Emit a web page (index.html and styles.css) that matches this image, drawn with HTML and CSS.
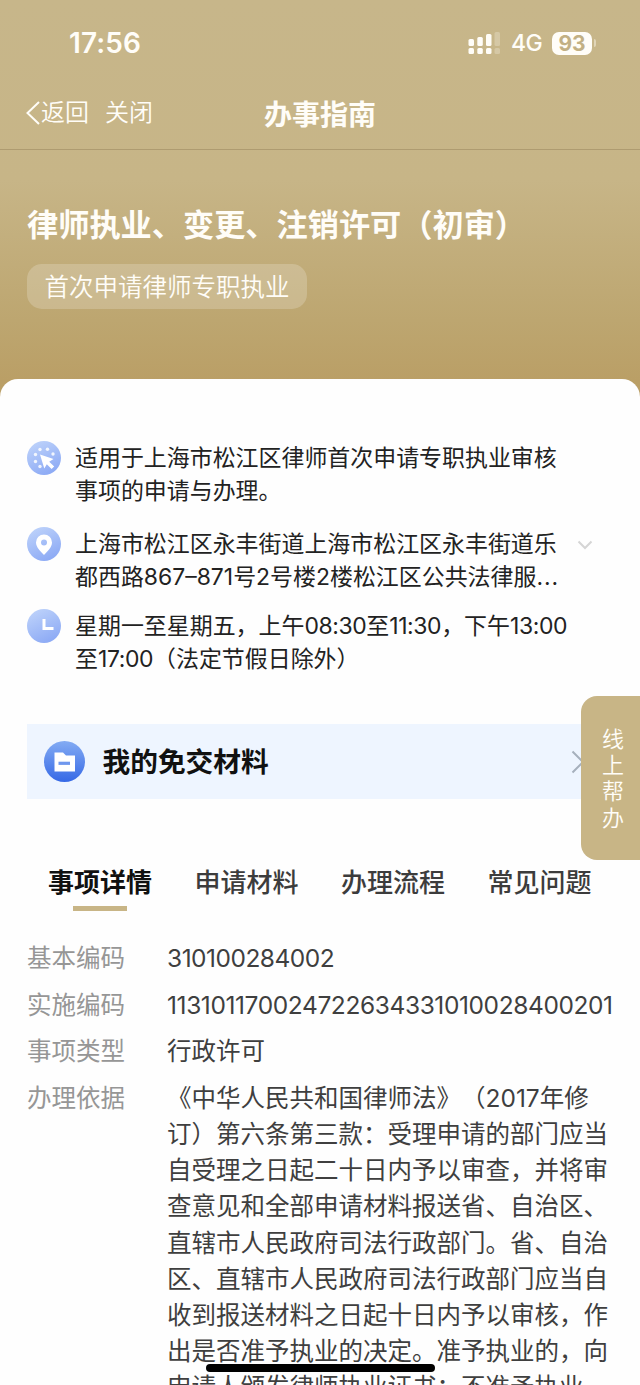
FILE: index.html
```html
<!DOCTYPE html>
<html lang="zh-CN">
<head>
<meta charset="utf-8">
<title>办事指南</title>
<link rel="stylesheet" href="styles.css">
</head>
<body>
<div class="screen">
  <header class="hero">
    <div class="status">
      <span class="time">17:56</span>
      <div class="indicators">
        <svg class="signal" width="33" height="24" viewBox="0 0 33 24" fill="#fffdf8">
          <rect x="0.5" y="8" width="5.5" height="7" rx="1.5"/><rect x="0.5" y="17" width="5.5" height="6" rx="1.5"/>
          <rect x="9.3" y="6" width="5.5" height="9" rx="1.5"/><rect x="9.3" y="17" width="5.5" height="6" rx="1.5"/>
          <rect x="18" y="3" width="5.5" height="12" rx="1.5"/><rect x="18" y="17" width="5.5" height="6" rx="1.5"/>
          <g opacity=".25"><rect x="26.5" y="1" width="5.5" height="14" rx="1.5"/><rect x="26.5" y="17" width="5.5" height="6" rx="1.5"/></g>
        </svg>
        <span class="network">4G</span>
        <span class="battery">93</span>
        <span class="battery-tip"></span>
      </div>
    </div>
    <nav class="navbar">
      <div class="nav-links">
        <svg width="16" height="26" viewBox="0 0 16 26" fill="none" stroke="#fffdf8" stroke-width="2"><path d="M14 2 2.500 13 14 24"/></svg>
        <span>返回</span><span class="close">关闭</span>
      </div>
      <h1 class="nav-title">办事指南</h1>
    </nav>
    <h2 class="service-title">律师执业、变更、注销许可（初审）</h2>
    <span class="pill">首次申请律师专职执业</span>
  </header>

  <main class="sheet">
    <section class="info">
      <div class="info-row">
        <svg class="info-icon" width="34" height="34" viewBox="0 0 34 34">
          <defs><linearGradient id="soft" x1="0" y1="0" x2="0.5" y2="1"><stop offset="0" stop-color="#c2d6fb"/><stop offset="1" stop-color="#8facf5"/></linearGradient></defs>
          <circle cx="17" cy="17" r="17" fill="url(#soft)"/>
          <g fill="#fff" opacity=".85">
            <circle cx="13" cy="8.500" r="1.700"/><circle cx="20.500" cy="8.300" r="1.700"/><circle cx="26" cy="13" r="1.700"/>
            <circle cx="8.500" cy="13.500" r="1.700"/><circle cx="8.500" cy="20.500" r="1.700"/><circle cx="13" cy="25.500" r="1.700"/>
          </g>
          <path d="m13 13.500 13.500 4.500-4.300 2.700 5 4.900-2.600 2.500-4.800-4.900-2.500 4.300z" fill="#fff"/>
        </svg>
        <p>适用于上海市松江区律师首次申请专职执业审核<br>事项的申请与办理。</p>
      </div>
      <div class="info-row">
        <svg class="info-icon" width="34" height="34" viewBox="0 0 34 34">
          <circle cx="17" cy="17" r="17" fill="url(#soft)"/>
          <path fill-rule="evenodd" fill="#fff" d="M17 7.500a8 8 0 0 1 8 8c0 4.500-4.200 8.500-8 12.500-3.800-4-8-8-8-12.500a8 8 0 0 1 8-8zm0 5a3 3 0 1 0 0 6 3 3 0 0 0 0-6z"/>
        </svg>
        <p>上海市松江区永丰街道上海市松江区永丰街道乐<br>都西路867–871号2号楼2楼松江区公共法律服<span class="dots">...</span></p>
        <svg class="expand" width="16" height="10" viewBox="0 0 16 10" fill="none" stroke="#d5d5d5" stroke-width="2"><path d="m1.500 1.500 6.500 6.500 6.500-6.500"/></svg>
      </div>
      <div class="info-row">
        <svg class="info-icon" width="34" height="34" viewBox="0 0 34 34">
          <circle cx="17" cy="17" r="17" fill="url(#soft)"/>
          <path d="M17 10v9.500h9.500" fill="none" stroke="#fff" stroke-width="3"/>
        </svg>
        <p>星期一至星期五，上午<span class="hours">08:30</span>至<span class="hours">11:30</span>，下午<span class="hours">13:00</span><br>至<span class="hours">17:00</span>（法定节假日除外）</p>
      </div>
    </section>

    <section class="materials">
      <svg width="41" height="41" viewBox="0 0 41 41">
        <defs><linearGradient id="strong" x1="0" y1="0" x2="0" y2="1"><stop offset="0" stop-color="#83abf3"/><stop offset="1" stop-color="#3669e6"/></linearGradient></defs>
        <circle cx="20.500" cy="20.500" r="20.500" fill="url(#strong)"/>
        <path d="M10.500 11.500h8.500l3 3h9V30.500h-20.500z" fill="#fff"/>
        <path d="M14.500 22.300h11.500" stroke="#6f97ee" stroke-width="3.200"/>
      </svg>
      <h3>我的免交材料</h3>
      <svg class="go" width="14" height="24" viewBox="0 0 14 24" fill="none" stroke="#a6b0bd" stroke-width="2"><path d="m1.500 1.500 10.500 10.500L1.500 22.500"/></svg>
    </section>

    <nav class="tabs">
      <span class="tab active">事项详情</span>
      <span class="tab">申请材料</span>
      <span class="tab">办理流程</span>
      <span class="tab">常见问题</span>
    </nav>

    <dl class="details">
      <dt>基本编码</dt><dd class="code">310100284002</dd>
      <dt>实施编码</dt><dd class="code long">113101170024722634331010028400201</dd>
      <dt>事项类型</dt><dd>行政许可</dd>
      <dt>办理依据</dt>
      <dd>《中华人民共和国律师法》（2017年修<br>订）第六条第三款：受理申请的部门应当<br>自受理之日起二十日内予以审查，并将审<br>查意见和全部申请材料报送省、自治区、<br>直辖市人民政府司法行政部门。省、自治<br>区、直辖市人民政府司法行政部门应当自<br>收到报送材料之日起十日内予以审核，作<br>出是否准予执业的决定。准予执业的，向<br>申请人颁发律师执业证书；不准予执业</dd>
    </dl>
  </main>
  <aside class="help">线上帮办</aside>
  <div class="home-indicator"></div>
</div>
</body>
</html>
```
FILE: styles.css
```css
* { box-sizing: border-box; }
body, h1, h2, h3, p, dl, dd { margin: 0; }
body {
  font-family: Inter, "Noto Sans CJK SC", sans-serif;
  background: #fefefe;
  text-spacing-trim: space-all;
  white-space: nowrap;
}
.screen { position: relative; width: 640px; height: 1385px; overflow: hidden; }
.hero {
  height: 400px;
  color: #fffdf8;
  background: linear-gradient(#c7b68a 0, #c7b587 180px, #bda670 320px, #ba9f66 380px);
}
.status {
  height: 77px;
  padding: 9px 44px 0 69px;
  display: flex;
  align-items: center;
  justify-content: space-between;
}
.time { font-size: 28px; font-weight: 600; letter-spacing: 0.1px; }
.indicators { display: flex; align-items: center; }
.network { margin: 0 9px 0 10px; font-size: 23px; font-weight: 500; width: 32px; letter-spacing: -0.5px; }
.battery {
  width: 40px; height: 23px; border-radius: 7px;
  background: #fffdf8; color: #c2b084;
  font-size: 21px; line-height: 23px; font-weight: 700; text-align: center;
}
.battery-tip { width: 2px; height: 8px; margin-left: 2px; border-radius: 0 3px 3px 0; background: #e0d5b8; }
.navbar {
  height: 73px;
  padding: 0 25px;
  display: grid;
  grid-template-columns: 1fr auto 1fr;
  align-items: center;
  border-bottom: 1px solid #ae9b70;
}
.nav-links { display: flex; align-items: center; font-size: 24px; line-height: 34px; font-weight: 350; }
.nav-links span { padding-bottom: 1px; }
.close { margin-left: 16px; }
.nav-title { padding-top: 3px; font-size: 28px; font-weight: 700; line-height: 40px; }
.service-title { margin: 52px 0 0 27px; font-size: 31.200px; line-height: 46px; font-weight: 600; }
.pill {
  display: inline-block;
  margin: 16px 0 0 27px;
  padding: 1px 17.500px 0;
  height: 45px;
  border-radius: 15px;
  background: rgba(255, 255, 255, .2);
  font-size: 24.500px; line-height: 45px; font-weight: 350;
}
.sheet {
  position: relative;
  margin-top: -21px;
  padding: 62px 27px 0;
  border-radius: 18px 18px 0 0;
  background: #fefefe;
}
.info { display: grid; row-gap: 17px; font-size: 22.950px; line-height: 33px; color: #222; }
.info-row { display: flex; align-items: flex-start; height: 66px; }
.info-row p { padding-top: 1px; }
.info-row:nth-child(2) { margin-top: 3px; }
.info-row:nth-child(3) { margin-top: -1px; }
.info-icon { margin-right: 14px; flex: none; }
.hours { letter-spacing: -0.4px; }
.dots { letter-spacing: 1px; }
.expand { margin: 13px 20px 0 auto; }
.materials {
  margin-top: 49px;
  height: 75px;
  padding: 0 28px 0 17px;
  display: flex;
  align-items: center;
  background: #eef5ff;
}
.materials h3 { margin-left: 17.500px; padding-top: 1px; font-size: 27.700px; font-weight: 600; line-height: 40px; color: #111; }
.go { margin-left: auto; }
.tabs { margin: 63px 21.500px 0 21px; display: flex; justify-content: space-between; font-size: 26px; line-height: 41px; font-weight: 500; color: #3c3c3c; }
.tab { height: 50px; }
.active { color: #111; font-weight: 600; }
.active::after { content: ""; display: block; width: 54px; height: 5px; margin: 3px auto 0; background: #c8b586; }
.details {
  margin-top: 28px;
  display: grid;
  grid-template-columns: 140px 1fr;
  row-gap: 10.500px;
  font-size: 24.500px;
  line-height: 36.150px;
  color: #3f3f3f;
}
.details dt { color: #969696; }
.code { letter-spacing: -0.5px; }
.long { letter-spacing: -0.400px; }
.help {
  position: absolute;
  left: 581px; top: 696px;
  width: 59px; height: 164px;
  padding: 30px 15px 0 21px;
  border-radius: 16px 0 0 16px;
  background: #c8b586;
  color: #fffdf8;
  font-size: 22px; line-height: 26.200px; font-weight: 350;
  white-space: normal;
}
.home-indicator {
  position: absolute;
  left: 206px; top: 1363.500px;
  width: 229px; height: 8px;
  border-radius: 4px;
  background: #000;
}
```
